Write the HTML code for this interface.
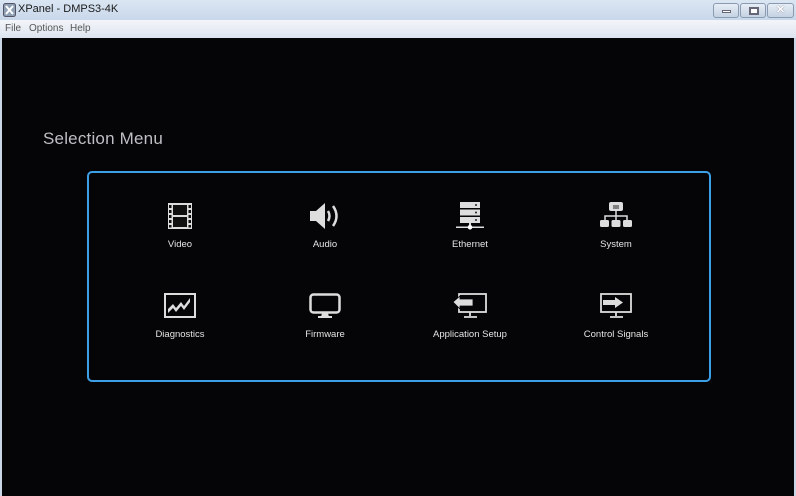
<!DOCTYPE html>
<html><head><meta charset="utf-8"><style>
*{margin:0;padding:0;box-sizing:border-box}
body{width:796px;height:496px;overflow:hidden;background:#c9d6e6;font-family:"Liberation Sans",sans-serif;position:relative}
.title{position:absolute;left:0;top:0;width:796px;height:20px;background:linear-gradient(#dbe6f3,#c8d7ea)}
.title span{position:absolute;left:18px;top:3px;font-size:11px;color:#1a1a1a}
.menu{position:absolute;left:0;top:20px;width:796px;height:18px;background:linear-gradient(#f3f5f9,#dde4ef);font-size:10px;color:#555}
.menu span{position:absolute;top:3px}
.content{position:absolute;left:2px;top:38px;width:792px;height:458px;background:#050507}
.btn{position:absolute;top:3px;height:15px;border:1px solid #8a9ab0;border-radius:3px;background:linear-gradient(#e6edf6,#c5d2e2)}
h1{position:absolute;left:43px;top:129px;font-size:17px;font-weight:normal;color:#bfbfc4;letter-spacing:0.2px}
.panel{position:absolute;left:87px;top:171px;width:624px;height:211px;border:2px solid #3d9fe6;border-radius:5px}
.item{position:absolute;width:140px;text-align:center;color:#e4e4e4;font-size:9.5px}
.item svg{display:block;margin:0 auto}
</style></head><body>
<div class="title">
<svg style="position:absolute;left:3px;top:3px" width="13" height="14" viewBox="0 0 13 14"><rect x="0.5" y="0.5" width="12" height="13" rx="2" fill="#8fa0b5" stroke="#556"/><path d="M3 3l7 8M10 3l-7 8" stroke="#fff" stroke-width="2"/></svg>
<span>XPanel - DMPS3-4K</span>
<div class="btn" style="left:713px;width:26px"><div style="position:absolute;left:8px;top:6px;width:9px;height:3px;background:#fff;border:1px solid #667"></div></div>
<div class="btn" style="left:740px;width:26px"><div style="position:absolute;left:8px;top:3px;width:10px;height:8px;border:2px solid #667;background:#fff"></div></div>
<div class="btn" style="left:767px;width:27px;text-align:center;font-size:11px;font-weight:bold;color:#fff;line-height:13px;text-shadow:0 0 1px #556">✕</div>
</div>
<div class="menu"><span style="left:5px">File</span><span style="left:29px">Options</span><span style="left:70px">Help</span></div>
<div class="content"></div>
<h1>Selection Menu</h1>
<div class="panel"></div>

<div class="item" style="left:110px;top:202px"><svg width="26" height="28" viewBox="0 0 26 28"><rect x="1" y="1" width="24" height="26" fill="#ddd"/><rect x="6" y="3" width="14" height="10" fill="#111"/><rect x="6" y="15" width="14" height="10" fill="#111"/><g fill="#111"><rect x="2" y="3" width="2.5" height="3"/><rect x="2" y="8" width="2.5" height="3"/><rect x="2" y="13" width="2.5" height="3"/><rect x="2" y="18" width="2.5" height="3"/><rect x="2" y="23" width="2.5" height="2.5"/><rect x="21.5" y="3" width="2.5" height="3"/><rect x="21.5" y="8" width="2.5" height="3"/><rect x="21.5" y="13" width="2.5" height="3"/><rect x="21.5" y="18" width="2.5" height="3"/><rect x="21.5" y="23" width="2.5" height="2.5"/></g></svg><div style="margin-top:9px">Video</div></div>

<div class="item" style="left:255px;top:202px"><svg width="32" height="28" viewBox="0 0 32 28"><path d="M1 9h6l9-8v26l-9-8H1z" fill="#ddd"/><path d="M19 9q3 5 0 10" stroke="#ddd" stroke-width="2.5" fill="none"/><path d="M24 4q7 10 0 20" stroke="#ddd" stroke-width="2.5" fill="none"/></svg><div style="margin-top:9px">Audio</div></div>

<div class="item" style="left:400px;top:202px"><svg width="28" height="28" viewBox="0 0 28 28"><rect x="4" y="0" width="20" height="6" fill="#ddd"/><rect x="4" y="7.5" width="20" height="6" fill="#ddd"/><rect x="4" y="15" width="20" height="6" fill="#ddd"/><g fill="#222"><circle cx="20" cy="3" r="1"/><circle cx="20" cy="10.5" r="1"/><circle cx="20" cy="18" r="1"/></g><rect x="13" y="21" width="2" height="4" fill="#ddd"/><rect x="0" y="24.5" width="28" height="1.5" fill="#ddd"/><circle cx="14" cy="25.3" r="2.3" fill="#fff"/></svg><div style="margin-top:9px">Ethernet</div></div>

<div class="item" style="left:546px;top:202px"><svg width="32" height="28" viewBox="0 0 32 28"><rect x="9" y="0" width="14" height="9" rx="2" fill="#ddd"/><path d="M13 4h6M13 6h6" stroke="#222"/><path d="M16 9v5M5 18v-4h22v4M16 14v4" stroke="#ddd" stroke-width="1.5" fill="none"/><rect x="0" y="18" width="9" height="7" rx="1.5" fill="#ddd"/><rect x="11.5" y="18" width="9" height="7" rx="1.5" fill="#ddd"/><rect x="23" y="18" width="9" height="7" rx="1.5" fill="#ddd"/></svg><div style="margin-top:9px">System</div></div>

<div class="item" style="left:110px;top:293px"><svg width="32" height="26" viewBox="0 0 32 26"><rect x="1" y="1" width="30" height="23" fill="none" stroke="#ddd" stroke-width="2"/><path d="M4 16l5-5 3 4 5-6 3 4 6-8v4l-6 8-3-4-5 6-3-4-5 5z" fill="#ddd"/></svg><div style="margin-top:10px">Diagnostics</div></div>

<div class="item" style="left:255px;top:293px"><svg width="32" height="26" viewBox="0 0 32 26"><rect x="1.5" y="1.5" width="29" height="18" rx="3" fill="none" stroke="#ddd" stroke-width="2.5"/><path d="M13 20h6l1 4h-8z" fill="#ddd"/><rect x="9" y="23" width="14" height="2" fill="#ddd"/></svg><div style="margin-top:10px">Firmware</div></div>

<div class="item" style="left:400px;top:293px"><svg width="34" height="26" viewBox="0 0 34 26"><rect x="6" y="1" width="27" height="18" fill="none" stroke="#ddd" stroke-width="1.8"/><path d="M17 19v4M11 24h13" stroke="#ddd" stroke-width="1.8"/><path d="M0 9l7-6v3h13v7H7v3z" fill="#ddd" stroke="#050507" stroke-width="0.8"/></svg><div style="margin-top:10px">Application Setup</div></div>

<div class="item" style="left:546px;top:293px"><svg width="32" height="26" viewBox="0 0 32 26"><rect x="1" y="1" width="30" height="18" fill="none" stroke="#ddd" stroke-width="1.8"/><path d="M16 19v4M10 24h13" stroke="#ddd" stroke-width="1.8"/><path d="M3 7h12V4l8 5.5-8 5.5v-3H3z" fill="#ddd"/></svg><div style="margin-top:10px">Control Signals</div></div>
</body></html>
